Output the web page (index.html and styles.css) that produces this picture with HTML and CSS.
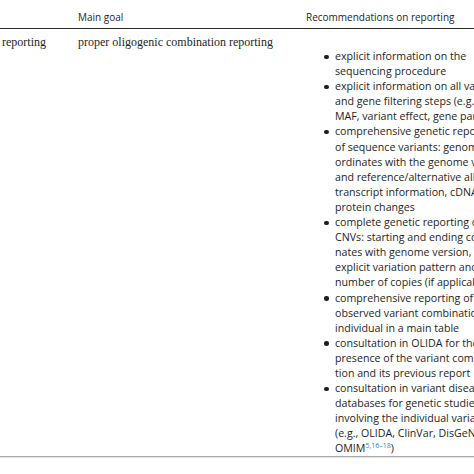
FILE: index.html
```
<!DOCTYPE html>
<html>
<head>
<meta charset="utf-8">
<link rel="stylesheet" href="styles.css">
</head>
<body>
<div class="table">
  <div class="row head">
    <div class="c1"></div>
    <div class="c2">Main goal</div>
    <div class="c3">Recommendations on reporting</div>
  </div>
  <div class="row body">
    <div class="c1 serif">reporting</div>
    <div class="c2 serif">proper oligogenic combination reporting</div>
    <div class="c3">
      <ul class="recs">
        <li><span>explicit information on the</span><span>sequencing procedure</span></li>
        <li><span>explicit information on all variant</span><span>and gene filtering steps (e.g., quality,</span><span>MAF, variant effect, gene panel)</span></li>
        <li><span>comprehensive genetic reporting</span><span>of sequence variants: genomic co-</span><span>ordinates with the genome version</span><span>and reference/alternative alleles,</span><span>transcript information, cDNA and</span><span>protein changes</span></li>
        <li><span>complete genetic reporting of</span><span>CNVs: starting and ending coordi-</span><span>nates with genome version,</span><span>explicit variation pattern and</span><span>number of copies (if applicable)</span></li>
        <li><span>comprehensive reporting of the</span><span>observed variant combination per</span><span>individual in a main table</span></li>
        <li><span>consultation in OLIDA for the</span><span>presence of the variant combina-</span><span>tion and its previous report</span></li>
        <li><span>consultation in variant disease</span><span>databases for genetic studies</span><span>involving the individual variants</span><span>(e.g., OLIDA, ClinVar, DisGeNET,</span><span>OMIM<sup class="ref">5,16–18</sup>)</span></li>
      </ul>
    </div>
  </div>
</div>
</body>
</html>
```

FILE: styles.css
```
html, body {
  margin: 0;
  padding: 0;
  overflow: hidden;
  background: #fff;
}
body {
  width: 474px;
  height: 474px;
  color: #1e1e1e;
  font-family: "Open Sans", "DejaVu Sans", sans-serif;
}
.table {
  width: 560px;
}
.row {
  display: grid;
  grid-template-columns: 78px 228px 1fr;
}
.head {
  height: 28px;
  border-bottom: 1.5px solid #2a2a2a;
  font-size: 10px;
  line-height: 14px;
}
.head > div {
  padding-top: 10px;
}
.c1 {
  padding-left: 2px;
}
.serif {
  font-family: "Liberation Serif", "Times New Roman", serif;
  font-size: 12px;
  line-height: 14px;
  color: #1e1e1e;
}
.body {
  padding-top: 6px;
  height: 421px;
  border-bottom: 1px solid #aaa;
  box-shadow: 0 1px 0 #e4e4e4;
}
.recs {
  list-style: none;
  margin: 14px 0 0 0;
  padding: 0 0 0 29px;
  font-size: 10.65px;
  line-height: 15.1px;
  font-family: "Open Sans", "DejaVu Sans", sans-serif;
  color: #1e1e1e;
}
.recs li {
  position: relative;
}
.recs li::before {
  content: "";
  position: absolute;
  left: -11px;
  top: 5.5px;
  width: 4.5px;
  height: 4.5px;
  border-radius: 50%;
  background: #1e1e1e;
}
.recs span {
  display: block;
  white-space: nowrap;
}
.ref {
  color: #3a86c0;
  font-size: 7px;
  line-height: 0;
  vertical-align: 4px;
}
```
